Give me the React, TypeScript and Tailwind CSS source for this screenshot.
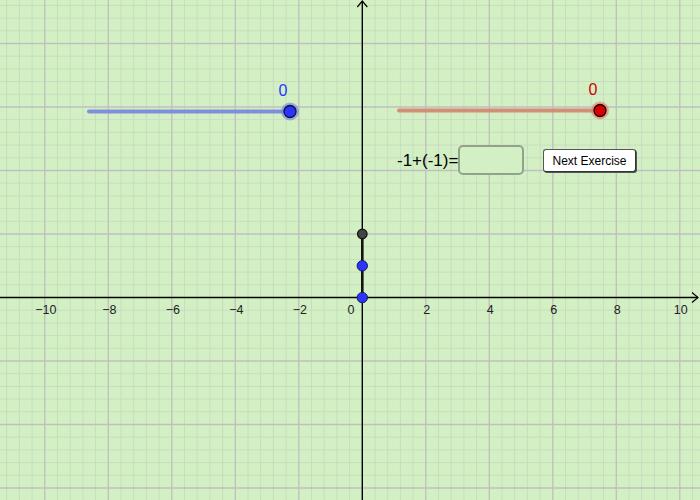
import React from 'react';

const OX = 362.3;
const OY = 297.5;
const UNIT = 31.75;
const MINOR = UNIT * 0.4;

function px(x: number) {
  return OX + x * UNIT;
}

function Grid() {
  const minor: React.ReactNode[] = [];
  const major: React.ReactNode[] = [];
  for (let k = -30; k <= 30; k++) {
    if (k === 0) continue;
    const x = OX + k * MINOR;
    const y = OY + k * MINOR;
    const isMajor = k % 5 === 0;
    const bucket = isMajor ? major : minor;
    const stroke = isMajor ? '#bfbfbf' : '#c8dcbe';
    const w = isMajor ? 1.3 : 1;
    if (x >= 0 && x <= 700) bucket.push(<line key={`v${k}`} x1={x} y1={0} x2={x} y2={500} stroke={stroke} strokeWidth={w} />);
    if (y >= 0 && y <= 500) bucket.push(<line key={`h${k}`} x1={0} y1={y} x2={700} y2={y} stroke={stroke} strokeWidth={w} />);
  }
  return (
    <g>
      {minor}
      {major}
    </g>
  );
}

const ticks = [-10, -8, -6, -4, -2, 2, 4, 6, 8, 10];
const font = "'Liberation Sans', Arial, sans-serif";

export default function App() {
  return (
    <div className="relative w-[700px] h-[500px] overflow-hidden bg-[#d3f0c4] font-['Liberation_Sans',Arial,sans-serif]">
      <svg width={700} height={500} viewBox="0 0 700 500" className="absolute inset-0">
        <Grid />

        {/* axes */}
        <line x1={0} y1={OY} x2={698} y2={OY} stroke="#000" strokeWidth={1.4} />
        <polyline points={`692,${OY - 5} 698,${OY} 692,${OY + 5}`} fill="none" stroke="#000" strokeWidth={1.2} />
        <line x1={OX} y1={1} x2={OX} y2={500} stroke="#000" strokeWidth={1.4} />
        <polyline points={`${OX - 5},7 ${OX},1 ${OX + 5},7`} fill="none" stroke="#000" strokeWidth={1.2} />

        {ticks.map((t) => (
          <text key={t} x={px(t) + 1} y={314} fontSize={12.5} textAnchor="middle" fill="#222" fontFamily={font}>
            {t < 0 ? `\u2212${-t}` : t}
          </text>
        ))}
        <text x={351} y={314} fontSize={12.5} textAnchor="middle" fill="#222" fontFamily={font}>
          0
        </text>

        {/* blue slider */}
        <line x1={89} y1={111.5} x2={290} y2={111.5} stroke="#7f8fdc" strokeWidth={4} strokeLinecap="round" />
        <circle cx={290} cy={111.5} r={9} fill="#6f7fe0" fillOpacity={0.6} />
        <circle cx={290} cy={111.5} r={6} fill="#2b33ff" stroke="#10103a" strokeWidth={1.3} />
        <text x={283} y={96} fontSize={16} textAnchor="middle" fill="#2638ff" fontFamily={font}>
          0
        </text>

        {/* red slider */}
        <line x1={399} y1={110.5} x2={600} y2={110.5} stroke="#d38e78" strokeWidth={4} strokeLinecap="round" />
        <circle cx={600} cy={110.5} r={9} fill="#e07a6e" fillOpacity={0.6} />
        <circle cx={600} cy={110.5} r={6} fill="#d80000" stroke="#200000" strokeWidth={1.3} />
        <text x={593} y={95} fontSize={16} textAnchor="middle" fill="#d00000" fontFamily={font}>
          0
        </text>

        {/* vectors on y axis */}
        <line x1={OX} y1={234} x2={OX} y2={297} stroke="#111" strokeWidth={2.6} />
        <circle cx={OX} cy={234} r={4.8} fill="#444" stroke="#111" strokeWidth={1.2} />
        <circle cx={OX} cy={265.8} r={5.2} fill="#2b33ff" stroke="#1a1a55" strokeWidth={1} />
        <circle cx={OX} cy={297.6} r={5.2} fill="#2b33ff" stroke="#1a1a55" strokeWidth={1} />
      </svg>

      {/* equation row */}
      <div className="absolute left-[397px] top-[145px] flex items-center h-[30px]">
        <span className="text-[17px] text-black leading-none">-1+(-1)=</span>
        <div className="w-[66px] h-[30px] rounded-[5px] border-2 border-[#93a38b] bg-[#d3f0c4]" />
      </div>

      <button className="absolute left-[543px] top-[149px] w-[93px] h-[23px] rounded-[3px] border border-[#555] border-b-[#333] border-r-[#333] bg-white text-[12px] text-black leading-none shadow-[1px_1px_0_#555]">
        Next Exercise
      </button>
    </div>
  );
}
